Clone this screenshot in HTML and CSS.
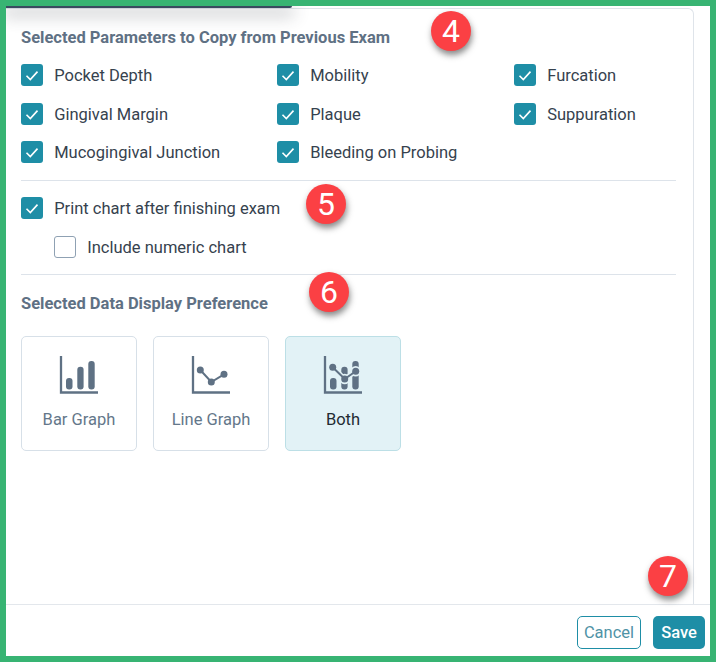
FILE: index.html
```html
<!DOCTYPE html>
<html lang="en">
<head>
  <meta charset="UTF-8">
  <title>Exam Preferences</title>
  <link rel="stylesheet" href="styles.css">
</head>
<body>

<div class="frame">
  <div class="top-bar"></div>

  <div class="content">
    <h2 class="section-title first">Selected Parameters to Copy from Previous Exam</h2>
    <div class="param-grid">
      <label class="check"><span class="box on"><svg viewBox="0 0 22 22"><path d="M5.5 11.8l3.800 3.800 7.200-8"/></svg></span>Pocket Depth</label>
      <label class="check"><span class="box on"><svg viewBox="0 0 22 22"><path d="M5.5 11.8l3.800 3.800 7.200-8"/></svg></span>Mobility</label>
      <label class="check"><span class="box on"><svg viewBox="0 0 22 22"><path d="M5.5 11.8l3.800 3.800 7.200-8"/></svg></span>Furcation</label>
      <label class="check"><span class="box on"><svg viewBox="0 0 22 22"><path d="M5.5 11.8l3.800 3.800 7.200-8"/></svg></span>Gingival Margin</label>
      <label class="check"><span class="box on"><svg viewBox="0 0 22 22"><path d="M5.5 11.8l3.800 3.800 7.200-8"/></svg></span>Plaque</label>
      <label class="check"><span class="box on"><svg viewBox="0 0 22 22"><path d="M5.5 11.8l3.800 3.800 7.200-8"/></svg></span>Suppuration</label>
      <label class="check"><span class="box on"><svg viewBox="0 0 22 22"><path d="M5.5 11.8l3.800 3.800 7.200-8"/></svg></span>Mucogingival Junction</label>
      <label class="check"><span class="box on"><svg viewBox="0 0 22 22"><path d="M5.5 11.8l3.800 3.800 7.200-8"/></svg></span>Bleeding on Probing</label>
    </div>

    <hr class="divider divider-one">

    <label class="check"><span class="box on"><svg viewBox="0 0 22 22"><path d="M5.5 11.8l3.800 3.800 7.200-8"/></svg></span>Print chart after finishing exam</label>
    <label class="check sub-check"><span class="box"></span>Include numeric chart</label>

    <hr class="divider divider-two">

    <h2 class="section-title">Selected Data Display Preference</h2>
    <div class="graph-options">
      <div class="graph-card">
        <svg class="graph-icon" viewBox="0 0 40 40">
          <path class="axis" d="M2 1v36.500h37"/>
          <rect x="7" y="23" width="6.500" height="11.500" rx="3"/>
          <rect x="18.300" y="11.700" width="6.300" height="22.800" rx="3"/>
          <rect x="29.300" y="6" width="6.400" height="28.500" rx="3"/>
        </svg>
        <span>Bar Graph</span>
      </div>
      <div class="graph-card">
        <svg class="graph-icon" viewBox="0 0 40 40">
          <path class="axis" d="M2 1v36.500h37"/>
          <path class="link" d="M9.300 15l11 12 12.700-7.700"/>
          <circle cx="9.300" cy="15" r="3.500"/>
          <circle cx="20.300" cy="27" r="3.500"/>
          <circle cx="33" cy="19.300" r="3.500"/>
        </svg>
        <span>Line Graph</span>
      </div>
      <div class="graph-card active">
        <svg class="graph-icon" viewBox="0 0 40 40">
          <path class="axis" d="M2 1v36.500h37"/>
          <rect x="7" y="23" width="6.500" height="11.500" rx="3"/>
          <rect x="18.300" y="11.700" width="6.300" height="22.800" rx="3"/>
          <rect x="29.300" y="6" width="6.400" height="28.500" rx="3"/>
          <path class="link halo" d="M9.700 12.300l12 11.700 11-7.700"/>
          <circle class="halo-dot" cx="21.700" cy="24" r="5.200"/>
          <circle class="halo-dot" cx="32.700" cy="16.300" r="5.200"/>
          <path class="link" d="M9.700 12.300l12 11.700 11-7.700"/>
          <circle cx="9.700" cy="12.300" r="3.500"/>
          <circle cx="21.700" cy="24" r="3.500"/>
          <circle cx="32.700" cy="16.300" r="3.500"/>
        </svg>
        <span>Both</span>
      </div>
    </div>
  </div>

  <div class="footer">
    <button class="btn-cancel">Cancel</button>
    <button class="btn-save">Save</button>
  </div>

  <!-- Callout numbers -->
  <div class="badge badge-4">4</div>
  <div class="badge badge-5">5</div>
  <div class="badge badge-6">6</div>
  <div class="badge badge-7">7</div>
</div>

</body>
</html>
```

FILE: styles.css
```css
html, body {
  margin: 0;
  padding: 0;
}
body {
  font-family: 'Roboto', sans-serif;
  background: #fff;
  width: 716px;
  height: 662px;
  overflow: hidden;
}
.frame {
  position: relative;
  box-sizing: border-box;
  width: 716px;
  height: 662px;
  border: 6px solid #38b473;
  background: #fff;
  display: flex;
  flex-direction: column;
  overflow: hidden;
}
.top-bar {
  position: absolute;
  left: 0;
  top: 0;
  width: 286px;
  height: 2px;
  background: #3a4a60;
  box-shadow: 0 5px 16px 3px rgba(50, 55, 65, 0.3);
  border-bottom-right-radius: 2px;
}
.content {
  flex: 1;
  box-sizing: border-box;
  margin: 2px 16px 0 0;
  padding: 19px 17px 0 15px;
  border-top: 1px solid #dfe4ea;
  border-right: 1px solid #dfe4ea;
  border-top-right-radius: 6px;
}
.section-title {
  margin: 0;
  font-size: 16.5px;
  line-height: 20px;
  font-weight: 700;
  color: #5f7184;
}
.param-grid {
  display: grid;
  grid-template-columns: 256px 237px auto;
  grid-template-rows: 39px 38px 22px;
  margin-top: 16px;
}
.check {
  display: flex;
  align-items: center;
  height: 22px;
  font-size: 16.5px;
  color: #36424e;
}
.box {
  box-sizing: border-box;
  flex: none;
  width: 22px;
  height: 22px;
  margin-right: 11.2px;
  border: 1px solid #8fa1b3;
  border-radius: 3px;
  background: #fff;
}
.box.on {
  border: none;
  background: #1e8ea6;
}
.box svg {
  display: block;
  width: 22px;
  height: 22px;
  fill: none;
  stroke: #fff;
  stroke-width: 1.6;
}
.sub-check {
  margin: 17px 0 0 33px;
}
.divider {
  margin: 0;
  border: none;
  border-top: 1px solid #dde3ea;
}
.divider-one {
  margin-top: 17px;
  margin-bottom: 16px;
}
.divider-two {
  margin-top: 16px;
  margin-bottom: 19px;
}
.graph-options {
  display: flex;
  gap: 16px;
  margin-top: 22px;
}
.graph-card {
  box-sizing: border-box;
  width: 116px;
  height: 115px;
  border: 1px solid #d7e0e8;
  border-radius: 5px;
  background: #fff;
  display: flex;
  flex-direction: column;
  align-items: center;
  font-size: 16.5px;
  color: #64778a;
}
.graph-card.active {
  background: #e2f2f6;
  border-color: #bcdfe6;
  color: #222b33;
}
.graph-icon {
  display: block;
  width: 40px;
  height: 40px;
  margin-top: 18px;
  margin-bottom: 15px;
  fill: #5f7184;
}
.graph-icon .axis {
  fill: none;
  stroke: #5f7184;
  stroke-width: 2.3;
}
.graph-icon .link {
  fill: none;
  stroke: #5f7184;
  stroke-width: 2;
}
.graph-icon .halo {
  stroke: #e2f2f6;
  stroke-width: 5;
}
.graph-icon .halo-dot {
  fill: #e2f2f6;
}
.footer {
  flex: none;
  box-sizing: border-box;
  height: 52px;
  border-top: 1px solid #e3e7ec;
  display: flex;
  justify-content: flex-end;
  gap: 12px;
  padding: 11px 5px 0 0;
}
.footer button {
  box-sizing: border-box;
  height: 33px;
  border-radius: 5px;
  font-family: inherit;
  font-size: 16.5px;
  padding: 0;
  cursor: pointer;
}
.btn-cancel {
  width: 64px;
  background: #fff;
  border: 1px solid #1e8ea6;
  color: #4f93a6;
}
.btn-save {
  width: 52px;
  background: #1e8ea6;
  border: none;
  color: #fff;
  font-weight: 500;
}
.badge {
  position: absolute;
  width: 40px;
  height: 40px;
  border-radius: 50%;
  background: #fb4044;
  color: #fff;
  font-size: 32px;
  line-height: 40px;
  text-align: center;
  box-shadow: 1px 4px 6px rgba(40, 40, 40, 0.55);
}
.badge-4 { left: 425px; top: 5px; }
.badge-5 { left: 300px; top: 178px; }
.badge-6 { left: 303px; top: 266px; }
.badge-7 { left: 642px; top: 550px; }
```
